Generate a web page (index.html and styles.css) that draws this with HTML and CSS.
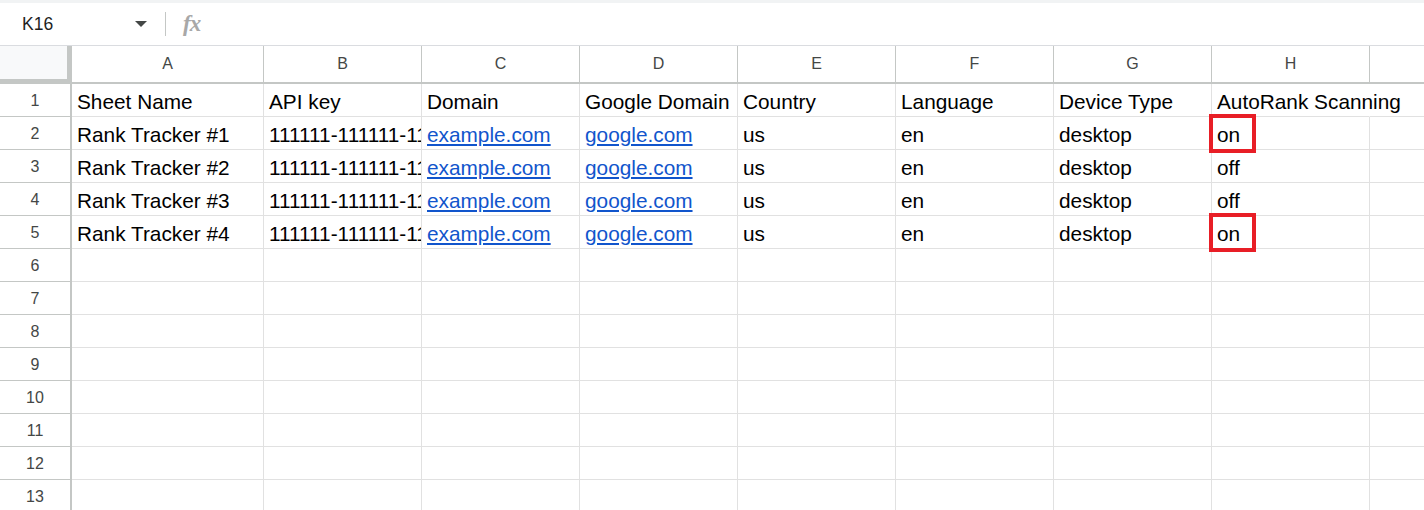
FILE: index.html
```html
<!DOCTYPE html>
<html lang="en">
<head>
    <meta charset="UTF-8">
    <title>Rank Tracker Settings</title>
    <link rel="stylesheet" href="styles.css">
</head>
<body>
<div class="formula-bar">
    <div class="name-box">
        <span class="cell-ref">K16</span>
        <span class="caret"></span>
    </div>
    <div class="divider"></div>
    <span class="fx">fx</span>
</div>

<div class="sheet" id="sheet">
    <div class="corner"></div>
    <div class="ch">A</div>
    <div class="ch">B</div>
    <div class="ch">C</div>
    <div class="ch">D</div>
    <div class="ch">E</div>
    <div class="ch">F</div>
    <div class="ch">G</div>
    <div class="ch">H</div>
    <div class="ch last"></div>

    <div class="rh">1</div>
    <div class="cell">Sheet Name</div>
    <div class="cell">API key</div>
    <div class="cell">Domain</div>
    <div class="cell">Google Domain</div>
    <div class="cell">Country</div>
    <div class="cell">Language</div>
    <div class="cell">Device Type</div>
    <div class="cell spill">AutoRank Scanning</div>
    <div class="cell last"></div>

    <div class="rh">2</div>
    <div class="cell">Rank Tracker #1</div>
    <div class="cell">111111-111111-111111</div>
    <div class="cell"><a href="#">example.com</a></div>
    <div class="cell"><a href="#">google.com</a></div>
    <div class="cell">us</div>
    <div class="cell">en</div>
    <div class="cell">desktop</div>
    <div class="cell marked">on</div>
    <div class="cell last"></div>

    <div class="rh">3</div>
    <div class="cell">Rank Tracker #2</div>
    <div class="cell">111111-111111-111111</div>
    <div class="cell"><a href="#">example.com</a></div>
    <div class="cell"><a href="#">google.com</a></div>
    <div class="cell">us</div>
    <div class="cell">en</div>
    <div class="cell">desktop</div>
    <div class="cell">off</div>
    <div class="cell last"></div>

    <div class="rh">4</div>
    <div class="cell">Rank Tracker #3</div>
    <div class="cell">111111-111111-111111</div>
    <div class="cell"><a href="#">example.com</a></div>
    <div class="cell"><a href="#">google.com</a></div>
    <div class="cell">us</div>
    <div class="cell">en</div>
    <div class="cell">desktop</div>
    <div class="cell">off</div>
    <div class="cell last"></div>

    <div class="rh">5</div>
    <div class="cell">Rank Tracker #4</div>
    <div class="cell">111111-111111-111111</div>
    <div class="cell"><a href="#">example.com</a></div>
    <div class="cell"><a href="#">google.com</a></div>
    <div class="cell">us</div>
    <div class="cell">en</div>
    <div class="cell">desktop</div>
    <div class="cell marked">on</div>
    <div class="cell last"></div>
</div>

<script>
    // empty rows below the data
    const sheet = document.getElementById('sheet');
    for (let row = 6; row <= 13; row++) {
        const head = document.createElement('div');
        head.className = 'rh';
        head.textContent = row;
        sheet.appendChild(head);
        for (let col = 0; col < 9; col++) {
            const cell = document.createElement('div');
            cell.className = col === 8 ? 'cell last' : 'cell';
            sheet.appendChild(cell);
        }
    }
</script>
</body>
</html>
```

FILE: styles.css
```css
body {
    margin: 0;
    font-family: Arial, "Liberation Sans", sans-serif;
    background: #fff;
    color: #000;
    overflow: hidden;
}

.formula-bar {
    display: flex;
    align-items: center;
    height: 46px;
    box-sizing: border-box;
    border-top: 3px solid #f1f3f4;
    border-bottom: 1px solid #dadce0;
}

.name-box {
    display: flex;
    align-items: center;
    justify-content: space-between;
    width: 125px;
    padding-left: 22px;
    padding-right: 18px;
}

.cell-ref {
    font-size: 17.5px;
    color: #1f1f1f;
}

.caret {
    width: 0;
    height: 0;
    border-left: 6px solid transparent;
    border-right: 6px solid transparent;
    border-top: 6px solid #444746;
}

.divider {
    width: 1px;
    height: 24px;
    background: #c4c7c5;
}

.fx {
    margin-left: 17px;
    font-family: "Liberation Serif", serif;
    font-style: italic;
    font-weight: bold;
    font-size: 23px;
    color: #a8a8a8;
    letter-spacing: -1px;
}

.sheet {
    display: grid;
    grid-template-columns: 72px 192px repeat(7, 158px) 1fr;
    grid-template-rows: 38px;
    grid-auto-rows: 33px;
}

.corner {
    background: #f8f9fa;
    border-right: 5px solid #c4c7c5;
    border-bottom: 5px solid #c4c7c5;
}

.ch {
    display: flex;
    align-items: center;
    justify-content: center;
    font-size: 16px;
    color: #444746;
    border-right: 1px solid #c4c7c5;
    border-bottom: 2px solid #c4c7c5;
}

.rh {
    display: flex;
    align-items: center;
    justify-content: center;
    padding-top: 2px;
    font-size: 16px;
    color: #444746;
    border-right: 2px solid #c4c7c5;
    border-bottom: 1px solid #c4c7c5;
}

.cell {
    position: relative;
    display: flex;
    align-items: flex-end;
    padding: 0 5px 2px;
    font-size: 20.8px;
    line-height: 24px;
    white-space: nowrap;
    overflow: hidden;
    border-right: 1px solid #e1e1e1;
    border-bottom: 1px solid #e1e1e1;
}

.ch, .rh, .cell, .corner {
    box-sizing: border-box;
}

.last {
    border-right: none;
}

.cell a {
    color: #1155cc;
}

/* text runs on into the empty cell to its right */
.cell.spill {
    overflow: visible;
    border-right-color: transparent;
    z-index: 1;
}

.cell.marked {
    overflow: visible;
}

.cell.marked::after {
    content: "";
    position: absolute;
    left: -3px;
    top: -3px;
    width: 47px;
    height: 39px;
    box-sizing: border-box;
    border: 4px solid #e81e26;
    z-index: 2;
}
```
